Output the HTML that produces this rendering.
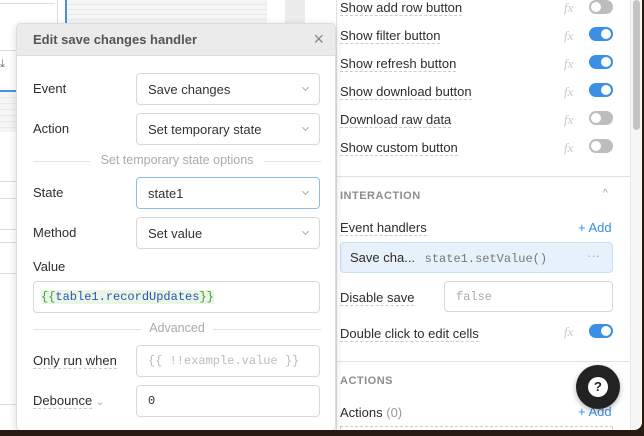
<!DOCTYPE html>
<html><head><style>
*{box-sizing:border-box;margin:0;padding:0}
body{width:644px;height:436px;overflow:hidden;background:#2a1a14;font-family:"Liberation Sans",sans-serif;position:relative}
.win{position:absolute;left:0;top:0;width:642px;height:430px;background:#fff;border-bottom-right-radius:8px;overflow:hidden}
.canvas{position:absolute;left:0;top:0;width:336px;height:430px;background:#fff}
.right{position:absolute;left:336px;top:0;width:294px;height:430px;background:#fff;border-left:1px solid #e2e2e2}
.sb{position:absolute;left:630px;top:0;width:12px;height:430px;background:#f7f7f7;border-left:1px solid #e8e8e8}
.thumb{position:absolute;left:633px;top:0;width:7px;height:130px;background:#c4c4c4;border-radius:4px}
.row{position:absolute;left:340px;font-size:13px;color:#2d2d2d}
.dl{border-bottom:1px dashed #ccc}
.fx{position:absolute;left:564px;font-style:italic;font-family:"Liberation Serif",serif;color:#c8c8c8;font-size:13px}
.tg{position:absolute;left:589px;width:24px;height:14px;border-radius:7px;background:#bdbdbd}
.tg::after{content:"";position:absolute;top:2px;left:2px;width:10px;height:10px;border-radius:50%;background:#fff}
.tg.on{background:#3b8fe4}.tg.on::after{left:12px}
.sec{position:absolute;left:340px;font-size:11px;font-weight:bold;color:#8d8d8d;letter-spacing:.5px}
.hr{position:absolute;left:337px;width:293px;height:1px;background:#e2e2e2}
.add{position:absolute;left:578px;font-size:13px;color:#3b8fe4}
.modal{position:absolute;left:16px;top:23px;width:320px;height:408px;background:#fff;border:1px solid #ddd;border-radius:5px;box-shadow:0 2px 8px rgba(0,0,0,.15);overflow:hidden}
.mh{height:32px;background:#ebebeb;border-bottom:1px solid #ddd;font-size:13px;font-weight:bold;color:#555;padding:8px 16px}
.lb{position:absolute;left:16px;font-size:13px;color:#2d2d2d}
.inp{position:absolute;left:119px;width:184px;height:32px;border:1px solid #d8d8d8;border-radius:4px;font-size:13px;color:#333;padding:8px 11px}
.inp.sel::after{content:"";position:absolute;right:11px;top:11px;width:4px;height:4px;border-right:1px solid #aaa;border-bottom:1px solid #aaa;transform:rotate(45deg)}
.div{position:absolute;left:16px;width:288px;font-size:12.5px;color:#aaa;text-align:center}
.mono{font-family:"Liberation Mono",monospace;font-size:12px}
</style></head><body>
<div class="win">
<div class="canvas">
 <div style="position:absolute;left:0;top:0;width:55px;height:4px;border-bottom:1px solid #ddd"></div>
 <div style="position:absolute;left:57px;top:0;width:1px;height:30px;background:#ddd"></div>
 <div style="position:absolute;left:65px;top:0;width:2px;height:30px;background:#4a90e2"></div>
 <div style="position:absolute;left:67px;top:0;width:200px;height:25px;background:repeating-linear-gradient(#f5f5f5 0 4px,#e8e8e8 4px 5px)"></div>
 <div style="position:absolute;left:285px;top:0;width:20px;height:25px;background:#ececec"></div>
 <div style="position:absolute;left:0;top:50px;width:16px;height:1px;background:#ddd"></div>
 <div style="position:absolute;left:0;top:58px;font-size:11px;color:#666">⤓</div>
 <div style="position:absolute;left:0;top:90px;width:16px;height:2px;background:#4a90e2"></div>
 <div style="position:absolute;left:0;top:92px;width:16px;height:40px;background:repeating-linear-gradient(#f5f5f5 0 5px,#e8e8e8 5px 6px)"></div>
 <div style="position:absolute;left:0;top:181px;width:16px;height:1px;background:#ddd"></div>
 <div style="position:absolute;left:0;top:198px;width:16px;height:1px;background:#ddd"></div>
 <div style="position:absolute;left:0;top:229px;width:16px;height:1px;background:#ddd"></div>
 <div style="position:absolute;left:0;top:242px;width:16px;height:1px;background:#ddd"></div>
 <div style="position:absolute;left:0;top:273px;width:16px;height:1px;background:#ddd"></div>
 <div style="position:absolute;left:0;top:404px;width:16px;height:1px;background:#ddd"></div>
</div>
<div class="right"></div>
<div class="sb"></div><div class="thumb"></div>
<div class="row" style="top:0"><span class="dl">Show add row button</span></div><span class="fx" style="top:0">fx</span><div class="tg" style="top:0"></div>
<div class="row" style="top:28px"><span class="dl">Show filter button</span></div><span class="fx" style="top:28px">fx</span><div class="tg on" style="top:27px"></div>
<div class="row" style="top:56px"><span class="dl">Show refresh button</span></div><span class="fx" style="top:56px">fx</span><div class="tg on" style="top:55px"></div>
<div class="row" style="top:84px"><span class="dl">Show download button</span></div><span class="fx" style="top:84px">fx</span><div class="tg on" style="top:83px"></div>
<div class="row" style="top:112px"><span class="dl">Download raw data</span></div><span class="fx" style="top:112px">fx</span><div class="tg" style="top:111px"></div>
<div class="row" style="top:140px"><span class="dl">Show custom button</span></div><span class="fx" style="top:140px">fx</span><div class="tg" style="top:139px"></div>
<div class="hr" style="top:176px"></div>
<div class="sec" style="top:190px">INTERACTION</div>
<div style="position:absolute;left:603px;top:188px;font-size:10px;color:#999">^</div>
<div class="row" style="top:220px"><span class="dl">Event handlers</span></div><div class="add" style="top:220px">+ Add</div>
<div style="position:absolute;left:340px;top:242px;width:273px;height:31px;background:#e6f1fb;border:1px solid #c9dff2;border-radius:4px;font-size:13px;color:#2d2d2d;padding:7px 9px">Save cha... <span class="mono" style="color:#777;margin-left:6px">state1.setValue()</span><span style="position:absolute;right:12px;top:5px;color:#aaa">···</span></div>
<div class="row" style="top:290px"><span class="dl">Disable save</span></div>
<div class="inp mono" style="left:444px;top:281px;width:169px;height:31px;color:#aaa">false</div>
<div class="row" style="top:326px"><span class="dl">Double click to edit cells</span></div><span class="fx" style="top:324px">fx</span><div class="tg on" style="top:324px"></div>
<div class="hr" style="top:361px"></div>
<div class="sec" style="top:375px">ACTIONS</div>
<div class="row" style="top:405px">Actions <span style="color:#999">(0)</span></div><div class="add" style="top:404px">+ Add</div>
<div style="position:absolute;left:340px;top:426px;width:273px;height:10px;border:1px dashed #ccc"></div>
<div style="position:absolute;left:576px;top:365px;width:44px;height:44px;border-radius:50%;background:#222;box-shadow:0 2px 6px rgba(0,0,0,.3)"><div style="position:absolute;left:12px;top:12px;width:20px;height:20px;border-radius:50%;background:#fff;color:#222;font-weight:bold;font-size:13px;text-align:center;line-height:20px">?</div></div>
<div class="modal">
 <div class="mh">Edit save changes handler<span style="position:absolute;right:11px;top:5px;font-weight:normal;font-size:18px;color:#888">×</span></div>
 <div class="lb" style="top:57px">Event</div><div class="inp sel" style="top:49px">Save changes</div>
 <div class="lb" style="top:97px">Action</div><div class="inp sel" style="top:89px">Set temporary state</div>
 <div class="div" style="top:129px">Set temporary state options</div>
 <div style="position:absolute;left:16px;top:137px;width:57px;height:1px;background:#e2e2e2"></div>
 <div style="position:absolute;left:247px;top:137px;width:57px;height:1px;background:#e2e2e2"></div>
 <div class="lb" style="top:161px">State</div><div class="inp sel" style="top:153px;border-color:#8dbdeb">state1</div>
 <div class="lb" style="top:201px">Method</div><div class="inp sel" style="top:193px">Set value</div>
 <div class="lb" style="top:235px">Value</div>
 <div class="inp mono" style="left:16px;top:257px;width:287px;height:32px;padding:8px 7px"><span style="background:#eaf5e6;color:#3aa336">{{<span style="color:#2a55b0">table1.recordUpdates</span>}}</span></div>
 <div class="div" style="top:297px">Advanced</div>
 <div style="position:absolute;left:16px;top:305px;width:108px;height:1px;background:#e2e2e2"></div>
 <div style="position:absolute;left:196px;top:305px;width:108px;height:1px;background:#e2e2e2"></div>
 <div class="lb" style="top:329px"><span class="dl">Only run when</span></div>
 <div class="inp mono" style="top:321px;color:#bbb">{{ !!example.value }}</div>
 <div class="lb" style="top:369px"><span class="dl">Debounce</span> <span style="color:#aaa;font-size:10px">⌄</span></div>
 <div class="inp mono" style="top:361px">0</div>
</div>
</div>
</body></html>
